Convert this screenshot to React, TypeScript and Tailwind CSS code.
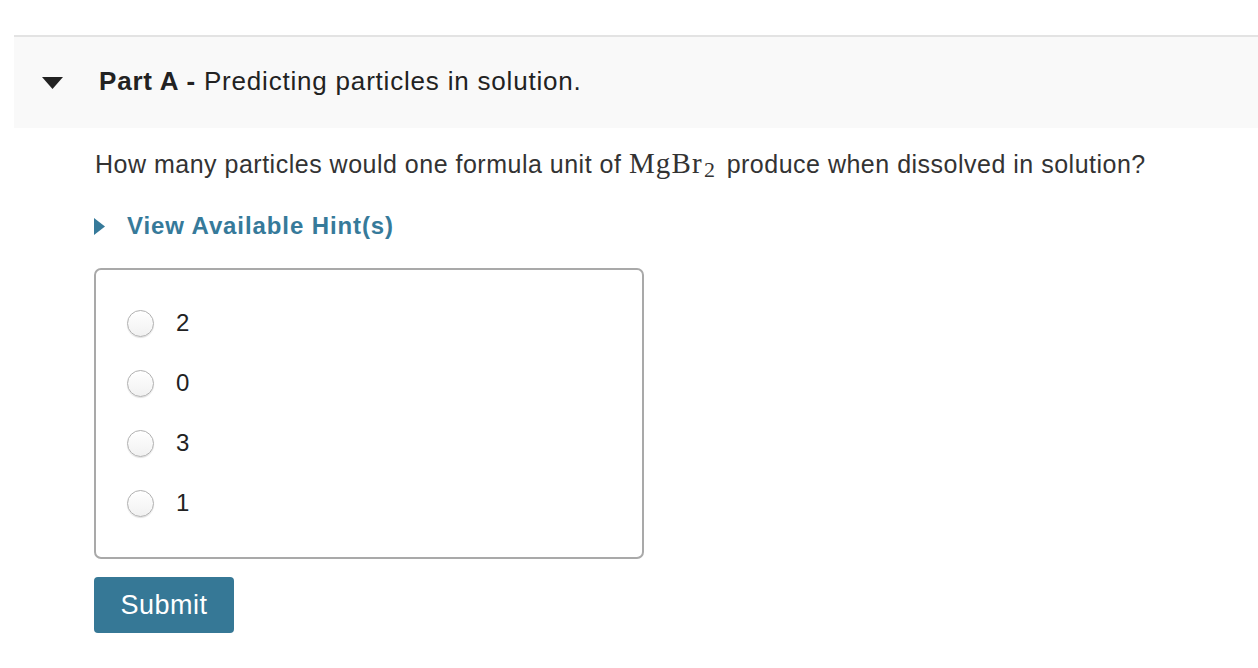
import React, { useState } from "react";

const sans = { fontFamily: '"Liberation Sans", Arial, Helvetica, sans-serif' };

const options = ["2", "0", "3", "1"];

export default function App() {
  const [picked, setPicked] = useState<string | null>(null);

  return (
    <div className="w-[1258px] h-[668px] bg-white text-[#333333] overflow-hidden" style={sans}>
      <div className="pt-[35px] pl-[14px]">
        {/* Part header */}
        <div className="border-t-2 border-[#e3e3e3] bg-[#f9f9f9] h-[93px] flex items-center">
          <svg width="21" height="12" viewBox="0 0 21 12" className="ml-[28px] mt-[1px]">
            <path d="M0 0 L21 0 L10.5 12 Z" fill="#222222" />
          </svg>
          <h2 className="ml-[36px] text-[26px] tracking-[0.8px] leading-[32px] text-[#222222] mt-[-3px]">
            <span className="font-bold">Part A - </span>
            Predicting particles in solution.
          </h2>
        </div>

        {/* Question body */}
        <div className="pl-[81px]">
          <p className="mt-[19px] text-[25px] tracking-[0.5px] leading-[32px]">
            How many particles would one formula unit of{" "}
            <span
              className="text-[29px] tracking-[1.2px]"
              style={{ fontFamily: '"Liberation Serif", "Times New Roman", serif' }}
            >
              MgBr<sub className="text-[22px] relative top-[4px] ml-[1px] mr-[3px]">2</sub>
            </span>{" "}
            produce when dissolved in solution?
          </p>

          <button className="mt-[30px] h-[32px] flex items-center text-[#367a9a] font-bold text-[24px] tracking-[0.9px]">
            <svg width="11" height="17" viewBox="0 0 11 17" className="ml-[-1px]">
              <path d="M0 0 L11 8.5 L0 17 Z" fill="#367a9a" />
            </svg>
            <span className="ml-[22px]">View Available Hint(s)</span>
          </button>

          {/* Choices */}
          <div className="mt-[26px] ml-[-1px] w-[550px] h-[291px] border-2 border-[#a9a9a9] rounded-[7px] pt-[23px]">
            {options.map((o) => (
              <label key={o} className="flex items-center h-[60px] cursor-pointer">
                <input
                  type="radio"
                  name="answer"
                  checked={picked === o}
                  onChange={() => setPicked(o)}
                  className="sr-only"
                />
                <span className="ml-[31px] w-[27px] h-[27px] rounded-full border border-[#b0b0b0] bg-gradient-to-b from-white to-[#f1f1f1] shadow-[0_1px_1px_rgba(0,0,0,0.12)] flex items-center justify-center">
                  {picked === o && <span className="w-[11px] h-[11px] rounded-full bg-[#367896]" />}
                </span>
                <span className="ml-[22px] text-[24px] text-[#222222]">{o}</span>
              </label>
            ))}
          </div>

          <button className="mt-[18px] ml-[-1px] w-[140px] h-[56px] bg-[#367896] rounded-[4px] text-white text-[27px] tracking-[0.5px]">
            Submit
          </button>
        </div>
      </div>
    </div>
  );
}
